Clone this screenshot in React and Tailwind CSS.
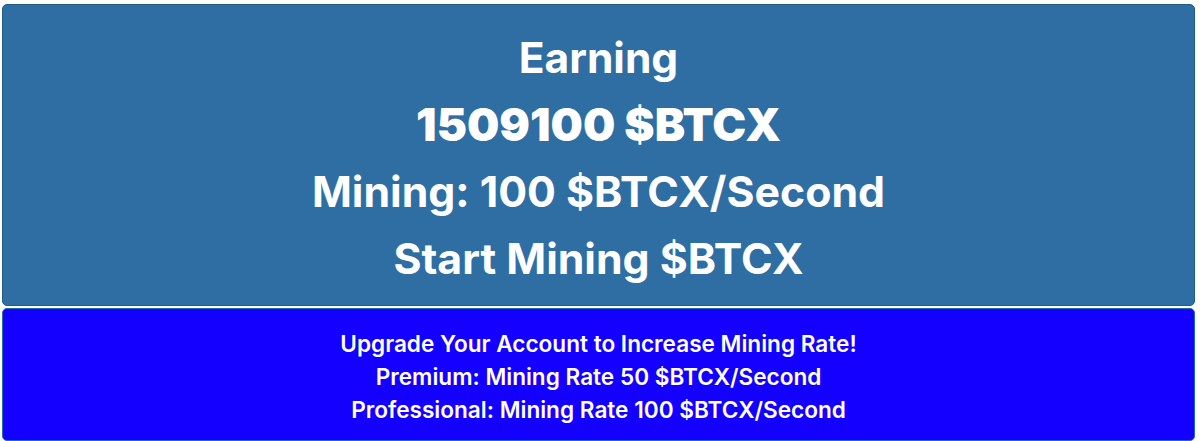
export default function App() {
  return (
    <div className="w-[1200px] h-[441px] bg-white pl-[2px] pr-[5px] pt-[4px] flex flex-col gap-[2px]" style={{ fontFamily: "Inter, 'Noto Sans', sans-serif" }}>
      <div className="h-[302px] bg-[#2e6ea3] border border-[#1f5c8e] rounded-[5px] flex flex-col items-center pt-[19px] text-white">
        <div className="h-[67px] leading-[67px] text-[42.5px] font-bold">Earning</div>
        <div className="h-[67px] leading-[67px] text-[45.5px] font-black">1509100 $BTCX</div>
        <div className="h-[67px] leading-[67px] text-[42.8px] font-bold">Mining: 100 $BTCX/Second</div>
        <div className="h-[67px] leading-[67px] text-[42.8px] font-bold">Start Mining $BTCX</div>
      </div>
      <div className="h-[133px] bg-[#1400ff] border border-[#1b6fae] rounded-[5px] flex flex-col items-center pt-[18px] text-white">
        <div className="h-[33px] leading-[33px] text-[22.6px] font-semibold">Upgrade Your Account to Increase Mining Rate!</div>
        <div className="h-[33px] leading-[33px] text-[22.6px] font-semibold">Premium: Mining Rate 50 $BTCX/Second</div>
        <div className="h-[33px] leading-[33px] text-[22.6px] font-semibold">Professional: Mining Rate 100 $BTCX/Second</div>
      </div>
    </div>
  );
}
